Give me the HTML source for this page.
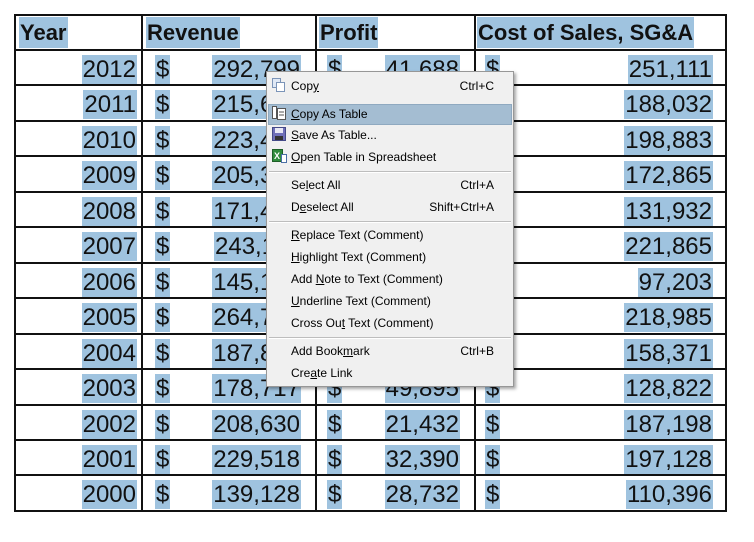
<!DOCTYPE html>
<html><head><meta charset="utf-8"><style>
*{margin:0;padding:0}
body{width:754px;height:542px;background:#fff;position:relative;overflow:hidden;font-family:"Liberation Sans",sans-serif}
.l{position:absolute;background:#111}
.h{position:absolute;background:#9fc3df;color:#111;font-size:24px;line-height:29px;height:29px;white-space:nowrap;padding:0 1px}
.b{font-weight:bold;font-size:22px;line-height:31px;height:31px}
#menu{position:absolute;left:266px;top:71px;width:246px;height:314px;background:#f0f0f0;border:1px solid #979797;box-shadow:2px 2px 3px rgba(0,0,0,.35);font-size:12px;color:#000}
.mi{position:absolute;left:24px;font-size:12px;line-height:16px}
.sc{position:absolute;right:19px;font-size:12px;line-height:16px}
.sep{position:absolute;left:2px;right:2px;height:1px;background:#bdbdbd;border-bottom:1px solid #fff}
u{text-decoration:underline}
</style></head><body>
<div id="t"></div>
<div id="menu">
<div style="position:absolute;left:1px;top:32px;width:242px;height:19px;background:#a4bdd2;border:1px solid #8fa9c0"></div>
<svg style="position:absolute;left:5px;top:6px" width="14" height="14"><rect x="0.5" y="0.5" width="8" height="9" fill="#dfe8f5" stroke="#7b94b8"/><rect x="4.5" y="4.5" width="8" height="9" fill="#fff" stroke="#7b94b8"/></svg>
<svg style="position:absolute;left:5px;top:34px" width="14" height="14"><rect x="0.5" y="0.5" width="4" height="12" fill="#fff" stroke="#555"/><rect x="5.5" y="2.5" width="8" height="11" fill="#fff" stroke="#555"/><line x1="7" y1="6" x2="12" y2="6" stroke="#555"/><line x1="7" y1="9" x2="12" y2="9" stroke="#555"/></svg>
<svg style="position:absolute;left:5px;top:55px" width="14" height="14"><rect x="0.5" y="0.5" width="13" height="13" fill="#6f6fb8" stroke="#444a88"/><rect x="3" y="1" width="8" height="5" fill="#e8e8f5"/><rect x="3" y="9" width="8" height="4" fill="#333"/></svg>
<svg style="position:absolute;left:5px;top:77px" width="15" height="14"><rect x="0.5" y="0.5" width="10" height="12" fill="#2f8c3c" stroke="#1d5e27"/><text x="2" y="10" font-size="9" fill="#fff" font-family="Liberation Sans" font-weight="bold">X</text><rect x="9.5" y="5.5" width="5" height="8" fill="#fff" stroke="#4a6fa5"/></svg>
<div class="mi" style="top:6px">Cop<u>y</u></div><div class="sc" style="top:6px">Ctrl+C</div>
<div class="mi" style="top:34px"><u>C</u>opy As Table</div>
<div class="mi" style="top:55px"><u>S</u>ave As Table...</div>
<div class="mi" style="top:77px"><u>O</u>pen Table in Spreadsheet</div>
<div class="sep" style="top:99px"></div>
<div class="mi" style="top:105px">Se<u>l</u>ect All</div><div class="sc" style="top:105px">Ctrl+A</div>
<div class="mi" style="top:127px">D<u>e</u>select All</div><div class="sc" style="top:127px">Shift+Ctrl+A</div>
<div class="sep" style="top:149px"></div>
<div class="mi" style="top:155px"><u>R</u>eplace Text (Comment)</div>
<div class="mi" style="top:177px"><u>H</u>ighlight Text (Comment)</div>
<div class="mi" style="top:199px">Add <u>N</u>ote to Text (Comment)</div>
<div class="mi" style="top:221px"><u>U</u>nderline Text (Comment)</div>
<div class="mi" style="top:243px">Cross Ou<u>t</u> Text (Comment)</div>
<div class="sep" style="top:265px"></div>
<div class="mi" style="top:271px">Add Book<u>m</u>ark</div><div class="sc" style="top:271px">Ctrl+B</div>
<div class="mi" style="top:293px">Cre<u>a</u>te Link</div>
</div>
<script>
var t=document.getElementById('t'),h='';
function L(x,y,w,hh){h+='<div class="l" style="left:'+x+'px;top:'+y+'px;width:'+w+'px;height:'+hh+'px"></div>';}
[14,141,315,474,725].forEach(function(x){L(x,14,2,498)});
L(14,14,713,2);
for(var i=0;i<=13;i++)L(14,Math.round(49+35.45*i),713,2);
L(14,510,713,2);
function S(txt,x,y,cls){h+='<div class="h '+(cls||'')+'" style="left:'+x+'px;top:'+y+'px">'+txt+'</div>';}
function R(txt,r,y){h+='<div class="h" style="right:'+(754-r)+'px;top:'+y+'px">'+txt+'</div>';}
S('Year',19,17,'b');S('Revenue',146,17,'b');S('Profit',319,17,'b');S('Cost of Sales, SG&amp;A',477,17,'b');
var d=[['2012','292,799','41,688','251,111'],['2011','215,640','27,608','188,032'],['2010','223,453','24,570','198,883'],['2009','205,320','32,455','172,865'],['2008','171,474','39,542','131,932'],['2007','243,114','21,249','221,865'],['2006','145,141','47,938','97,203'],['2005','264,771','45,786','218,985'],['2004','187,827','29,456','158,371'],['2003','178,717','49,895','128,822'],['2002','208,630','21,432','187,198'],['2001','229,518','32,390','197,128'],['2000','139,128','28,732','110,396']];
d.forEach(function(r,i){var y=Math.round(49+35.45*i)+6;
R(r[0],137,y);S('$',155,y);R(r[1],301,y);S('$',327,y);R(r[2],460,y);S('$',485,y);R(r[3],713,y);});
t.innerHTML=h;
</script>
</body></html>
